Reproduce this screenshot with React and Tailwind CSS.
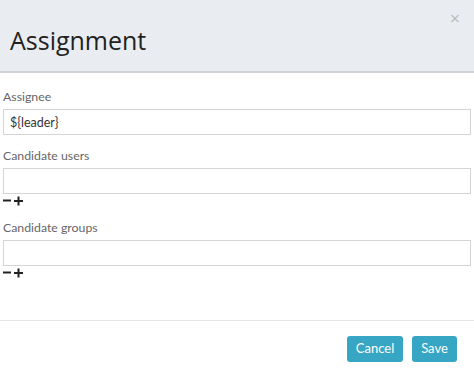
import React from "react";

function Field({ label, value, list }) {
  return (
    <div>
      <label className="block font-['Lato',sans-serif] text-[12.3px] leading-[18px] text-[#666]">{label}</label>
      <input
        readOnly
        value={value || ""}
        className="mt-[3px] block w-full h-[26px] border border-[#d4d4d4] px-[6px] font-['Lato',sans-serif] text-[12.5px] text-[#333] outline-none bg-white"
      />
      {list && (
        <div className="flex items-center gap-[2px] h-[13px] text-[#222]">
          <svg width="9" height="9" viewBox="0 0 9 9">
            <rect x="0" y="3.5" width="8" height="2" fill="currentColor" />
          </svg>
          <svg width="10" height="10" viewBox="0 0 10 10">
            <rect x="0" y="4" width="9" height="2" fill="currentColor" />
            <rect x="3.5" y="0.5" width="2" height="9" fill="currentColor" />
          </svg>
        </div>
      )}
    </div>
  );
}

export default function App() {
  return (
    <div className="w-[474px] h-[378px] bg-white font-['Open_Sans',sans-serif] overflow-hidden">
      {/* Header */}
      <div className="relative h-[73px] bg-[#e9edf2] border-b-2 border-[#cfd2d6] pl-[10px]">
        <h1 className="pt-[22px] text-[25px] leading-[36px] text-[#222]">Assignment</h1>
        <span className="absolute right-[14px] top-[8px] text-[18px] leading-[20px] text-[#bbb]">×</span>
      </div>

      {/* Body */}
      <div className="px-[3px] pt-[15px] h-[248px] border-b border-[#e5e5e5]">
        <Field label="Assignee" value="${leader}" />
        <div className="mt-[12px]">
          <Field label="Candidate users" list />
        </div>
        <div className="mt-[12px]">
          <Field label="Candidate groups" list />
        </div>
      </div>

      {/* Footer */}
      <div className="flex justify-end gap-[9px] pr-[17px] pt-[15px]">
        <button className="h-[26px] w-[56px] rounded-[3px] bg-[#37a6c4] text-white font-['Lato',sans-serif] text-[13px]">Cancel</button>
        <button className="h-[26px] w-[45px] rounded-[3px] bg-[#37a6c4] text-white font-['Lato',sans-serif] text-[13px]">Save</button>
      </div>
    </div>
  );
}
